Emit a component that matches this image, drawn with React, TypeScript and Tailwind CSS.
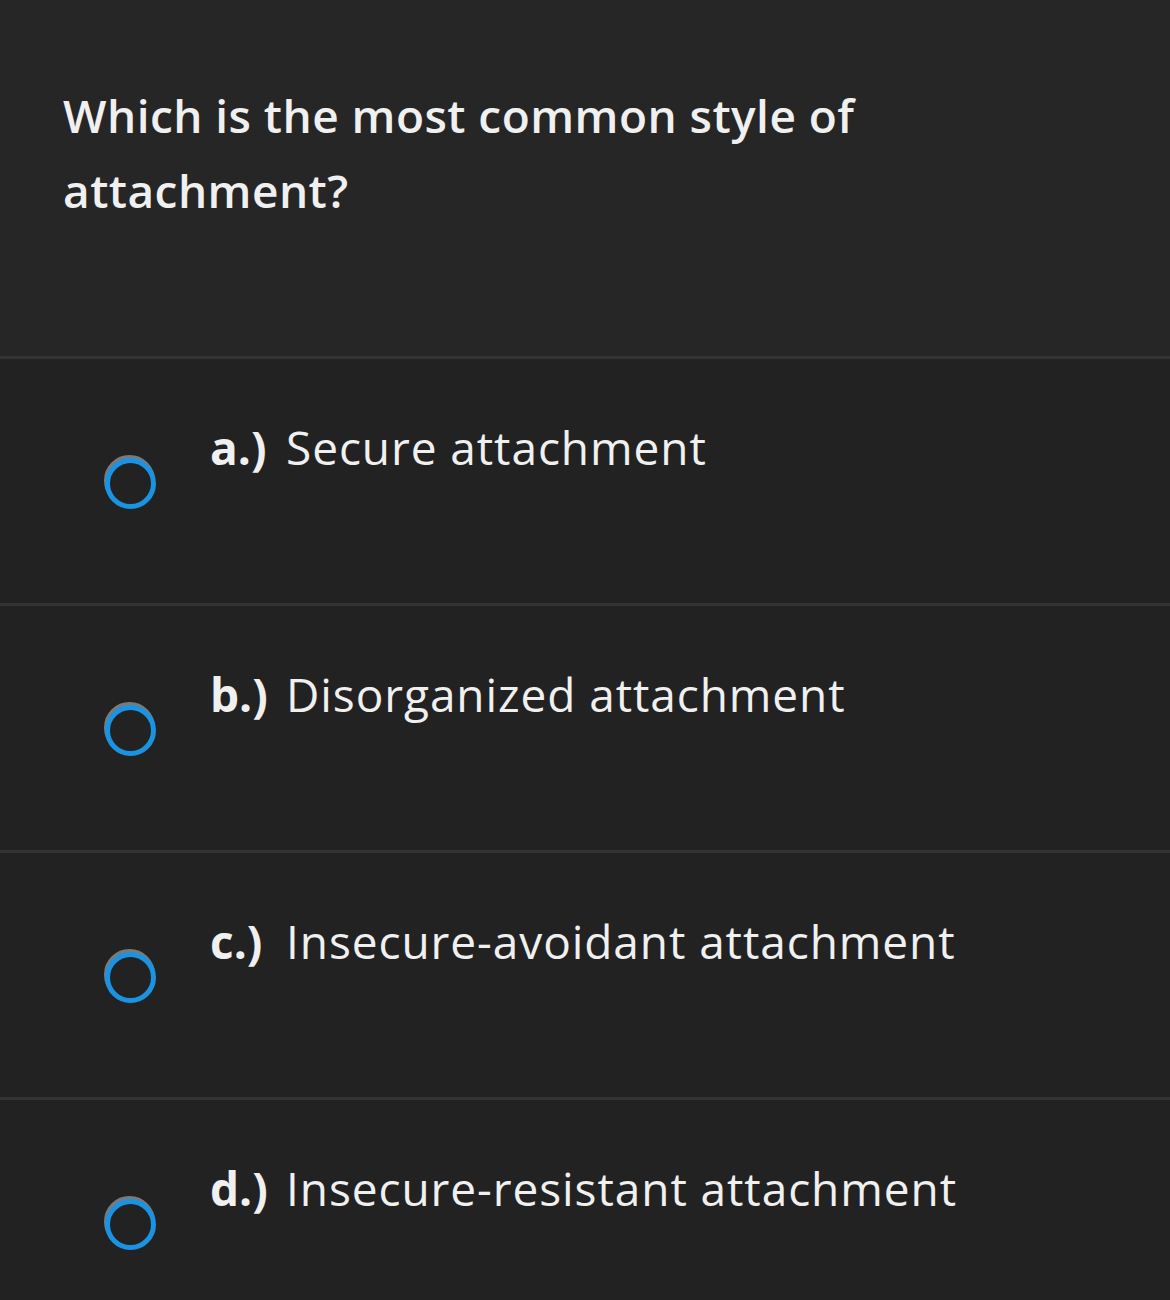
import React from 'react';

const options = [
  { label: 'a.)', text: 'Secure attachment' },
  { label: 'b.)', text: 'Disorganized attachment' },
  { label: 'c.)', text: 'Insecure-avoidant attachment' },
  { label: 'd.)', text: 'Insecure-resistant attachment' },
];

const Radio = () => (
  <div className="relative w-[52px] h-[52px] shrink-0">
    {/* grey shadow ring behind the blue one */}
    <div className="absolute left-[-1px] top-[-3px] w-[51px] h-[51px] rounded-full border-[5px] border-[#7a7a7a]" />
    <div className="absolute left-0 top-0 w-[51px] h-[51px] rounded-full border-[5px] border-[#1a93e3] bg-[#222222]" />
  </div>
);

export default function App() {
  return (
    <div className="w-[1170px] min-h-[1300px] bg-[#222222] font-['Open_Sans','Liberation_Sans',sans-serif] text-[#f0f0f0]">
      <div className="bg-[#262626] h-[356px] pl-[63px] pt-[78px]">
        <h1 className="text-[46px] leading-[75px] font-semibold tracking-[0.01em] w-[860px]">
          Which is the most common style of attachment?
        </h1>
      </div>
      {options.map((o) => (
        <div key={o.label} className="border-t-[3px] border-[#333333] h-[247px] flex">
          <div className="pl-[105px] pt-[99px]">
            <Radio />
          </div>
          <div className="pl-[53px] pt-[58px] flex items-baseline text-[46px] leading-[60px] tracking-[0.02em]">
            <span className="font-bold w-[76px] tracking-normal">{o.label}</span>
            <span>{o.text}</span>
          </div>
        </div>
      ))}
    </div>
  );
}
